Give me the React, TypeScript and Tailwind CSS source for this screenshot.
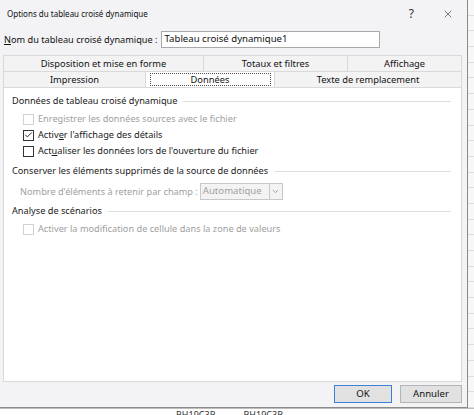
import { Check, ChevronDown, X } from "lucide-react";

const font = "font-['Noto_Sans','Liberation_Sans',sans-serif]";

function SectionTitle({ label }: { label: string }) {
  return (
    <div className="flex items-center gap-1.5 h-[16px]">
      <span className="whitespace-nowrap text-[#1a1a1a]">{label}</span>
      <div className="h-px flex-1 bg-[#dedede]" />
    </div>
  );
}

function CheckRow({
  label,
  checked = false,
  disabled = false,
  underlineIndex,
}: {
  label: string;
  checked?: boolean;
  disabled?: boolean;
  underlineIndex?: number;
}) {
  const text =
    underlineIndex != null ? (
      <>
        {label.slice(0, underlineIndex)}
        <span className="underline">{label[underlineIndex]}</span>
        {label.slice(underlineIndex + 1)}
      </>
    ) : (
      label
    );
  return (
    <div className="flex items-center gap-[4px] h-[16px] pl-[11px]">
      <span
        className={
          "flex h-[11px] w-[11px] items-center justify-center border bg-white " +
          (disabled ? "border-[#d2d2d2]" : "border-[#333]")
        }
      >
        {checked ? <Check className="h-[10px] w-[10px] text-[#222]" strokeWidth={2.5} /> : null}
      </span>
      <span className={disabled ? "text-[#a0a0a0]" : "text-[#1a1a1a]"}>{text}</span>
    </div>
  );
}

function Tab({
  label,
  className,
  selected = false,
}: {
  label: string;
  className: string;
  selected?: boolean;
}) {
  return (
    <div
      className={
        "flex h-[16px] items-center justify-center border-r border-t border-[#d9d9d9] " +
        (selected ? "bg-white " : "bg-[#f3f3f4] ") +
        className
      }
    >
      {selected ? (
        <span className="flex h-[13px] w-[121px] items-center justify-center border border-dotted border-[#555]">
          {label}
        </span>
      ) : (
        <span>{label}</span>
      )}
    </div>
  );
}

export default function App() {
  return (
    <div className={"relative h-[415px] w-[474px] overflow-hidden bg-white text-[9.2px] text-[#111] " + font}>
      <div className="flex h-[408px]">
        {/* dialog */}
        <div className="flex h-[408px] w-[468px] flex-col border-r border-b border-[#8a8a8a] bg-[#f3f2f4]">
          {/* title bar */}
          <div className="flex h-[31px] items-center pl-[7px] pr-[13px] pb-[3px] text-[8px]">
            <span className="flex-1">Options du tableau croisé dynamique</span>
            <span className="mr-[28px] text-[12px] text-[#333]">?</span>
            <X className="h-[12px] w-[12px] text-[#333]" strokeWidth={1.3} />
          </div>

          {/* name */}
          <div className="flex h-[17px] items-center gap-[3px] pl-[4px] text-[9.2px]">
            <span>
              <span className="underline">N</span>om du tableau croisé dynamique :
            </span>
            <div className="flex h-[17px] w-[219px] items-center border border-[#a9a9a9] bg-white pl-[3px] text-[9.6px]">
              Tableau croisé dynamique1
            </div>
          </div>

          {/* tabs */}
          <div className="mt-[7px] ml-[3px] w-[459px] border-l border-[#d9d9d9] text-[9.3px]">
            <div className="flex">
              <Tab label="Disposition et mise en forme" className="w-[200px]" />
              <Tab label="Totaux et filtres" className="w-[144px]" />
              <Tab label="Affichage" className="flex-1" />
            </div>
            <div className="flex">
              <Tab label="Impression" className="w-[142px]" />
              <Tab label="Données" className="w-[129px]" selected />
              <Tab label="Texte de remplacement" className="flex-1" />
            </div>
          </div>

          {/* panel */}
          <div className="ml-[3px] flex h-[295px] w-[459px] flex-col border border-[#d9d9d9] bg-white pl-[8px] pr-[10px] pt-[5px]">
            <SectionTitle label="Données de tableau croisé dynamique" />
            <div className="mt-[2px] flex flex-col">
              <CheckRow label="Enregistrer les données sources avec le fichier" disabled />
              <CheckRow label="Activer l'affichage des détails" checked underlineIndex={5} />
              <CheckRow label="Actualiser les données lors de l'ouverture du fichier" underlineIndex={3} />
            </div>
            <div className="mt-[4px]">
              <SectionTitle label="Conserver les éléments supprimés de la source de données" />
            </div>
            <div className="mt-[4px] flex h-[17px] items-center pl-[8px]">
              <span className="text-[#a0a0a0]">Nombre d'éléments à retenir par champ :</span>
              <div className="ml-[2px] flex h-[17px] w-[83px] items-center justify-between border border-[#c8c8c8] bg-[#f3f3f3] pl-[2px] text-[9.6px] text-[#a0a0a0]">
                <span>Automatique</span>
                <span className="flex h-[15px] w-[13px] items-center justify-center border-l border-[#c8c8c8]">
                  <ChevronDown className="h-[9px] w-[9px] text-[#888]" strokeWidth={2} />
                </span>
              </div>
            </div>
            <div className="mt-[3px]">
              <SectionTitle label="Analyse de scénarios" />
            </div>
            <div className="mt-[2px]">
              <CheckRow label="Activer la modification de cellule dans la zone de valeurs" disabled />
            </div>
          </div>

          {/* buttons */}
          <div className="mt-[3px] flex justify-end gap-[8px] pr-[5px] text-[9.6px]">
            <div className="flex h-[18px] w-[58px] items-center justify-center border border-[#3c7fd6] bg-[#e1e1e1]">
              OK
            </div>
            <div className="flex h-[18px] w-[62px] items-center justify-center border border-[#b4b4b4] bg-[#e1e1e1]">
              Annuler
            </div>
          </div>
        </div>

        {/* sheet behind, right */}
        <div className="flex flex-1 flex-col bg-[#f7f7f7]">
          {Array.from({ length: 26 }).map((_, i) => (
            <div key={i} className="h-[16px] border-b border-[#dcdcdc]" />
          ))}
        </div>
      </div>

      {/* sheet behind, bottom */}
      <div className="flex h-[7px] items-end gap-[28px] overflow-hidden border-t border-[#bdbdbd] bg-white pl-[176px] text-[9px] leading-[9px] text-[#333]">
        <span className="translate-y-[4px]">BH19C3B</span>
        <span className="translate-y-[4px]">BH19C3B</span>
      </div>
    </div>
  );
}
